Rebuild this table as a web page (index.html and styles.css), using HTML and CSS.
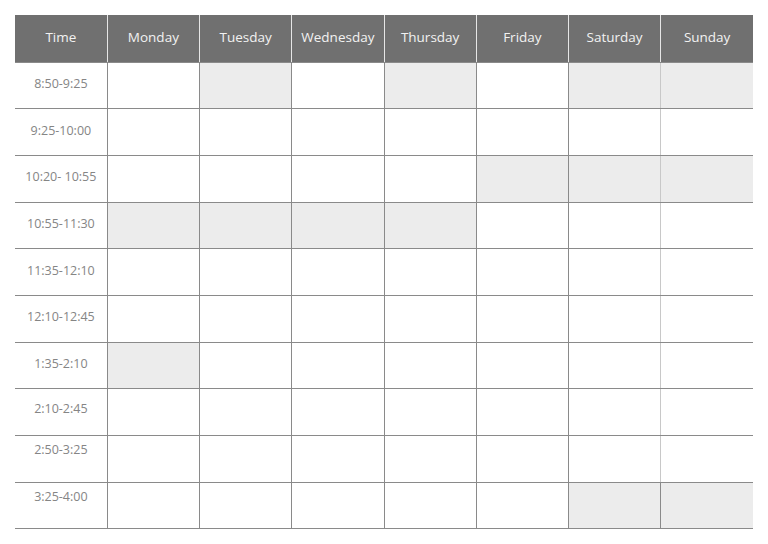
FILE: index.html
```html
<!DOCTYPE html>
<html>
<head>
<meta charset="utf-8">
<link rel="stylesheet" href="styles.css">
</head>
<body>
<table class="timetable">
  <colgroup>
    <col class="c"><col class="c"><col class="c"><col class="c"><col class="c"><col class="c"><col class="c"><col class="c">
  </colgroup>
  <thead>
    <tr>
      <th>Time</th><th>Monday</th><th>Tuesday</th><th>Wednesday</th><th>Thursday</th><th>Friday</th><th>Saturday</th><th>Sunday</th>
    </tr>
  </thead>
  <tbody>
    <tr><td class="time">8:50-9:25</td><td></td><td class="busy"></td><td></td><td class="busy"></td><td></td><td class="busy"></td><td class="busy sun"></td></tr>
    <tr><td class="time">9:25-10:00</td><td></td><td></td><td></td><td></td><td></td><td></td><td class="sun"></td></tr>
    <tr><td class="time">10:20- 10:55</td><td></td><td></td><td></td><td></td><td class="busy"></td><td class="busy"></td><td class="busy sun"></td></tr>
    <tr><td class="time">10:55-11:30</td><td class="busy"></td><td class="busy"></td><td class="busy"></td><td class="busy"></td><td></td><td></td><td class="sun"></td></tr>
    <tr><td class="time">11:35-12:10</td><td></td><td></td><td></td><td></td><td></td><td></td><td class="sun"></td></tr>
    <tr><td class="time">12:10-12:45</td><td></td><td></td><td></td><td></td><td></td><td></td><td class="sun"></td></tr>
    <tr><td class="time">1:35-2:10</td><td class="busy"></td><td></td><td></td><td></td><td></td><td></td><td class="sun"></td></tr>
    <tr><td class="time up1">2:10-2:45</td><td></td><td></td><td></td><td></td><td></td><td></td><td class="sun"></td></tr>
    <tr><td class="time up2">2:50-3:25</td><td></td><td></td><td></td><td></td><td></td><td></td><td class="sun"></td></tr>
    <tr><td class="time up2">3:25-4:00</td><td></td><td></td><td></td><td></td><td></td><td class="busy"></td><td class="busy"></td></tr>
  </tbody>
</table>
</body>
</html>
```
FILE: styles.css
```css
html, body {
  margin: 0;
  background: #ffffff;
}
body {
  padding: 15px;
  font-family: "Open Sans", "DejaVu Sans", sans-serif;
}
.timetable {
  width: 738px;
  table-layout: fixed;
  border-collapse: collapse;
}
.timetable .c {
  width: 92.25px;
}
.timetable thead tr {
  height: 47px;
}
.timetable tbody tr {
  height: 46.7px;
}
.timetable th {
  padding: 0 0 2px;
  background: #707070;
  color: #f2f2f2;
  font-weight: 400;
  font-size: 13.5px;
  text-align: center;
  vertical-align: middle;
  border-left: 1px solid #e6e6e6;
  border-bottom: 1px solid #8a8a8a;
}
.timetable th:first-child {
  border-left: none;
}
.timetable td {
  padding: 0;
  border-left: 1px solid #8a8a8a;
  border-bottom: 1px solid #8a8a8a;
}
.timetable td.time {
  border-left: none;
  color: #858585;
  font-size: 12.5px;
  text-align: center;
  vertical-align: middle;
  padding-bottom: 4px;
}
.timetable td.up1 {
  padding-bottom: 8px;
}
.timetable td.up2 {
  vertical-align: top;
  padding: 5px 0 0;
}
.timetable td.sun {
  border-left-color: #c8c8c8;
}
.timetable td.busy {
  background: #ececec;
}
```
